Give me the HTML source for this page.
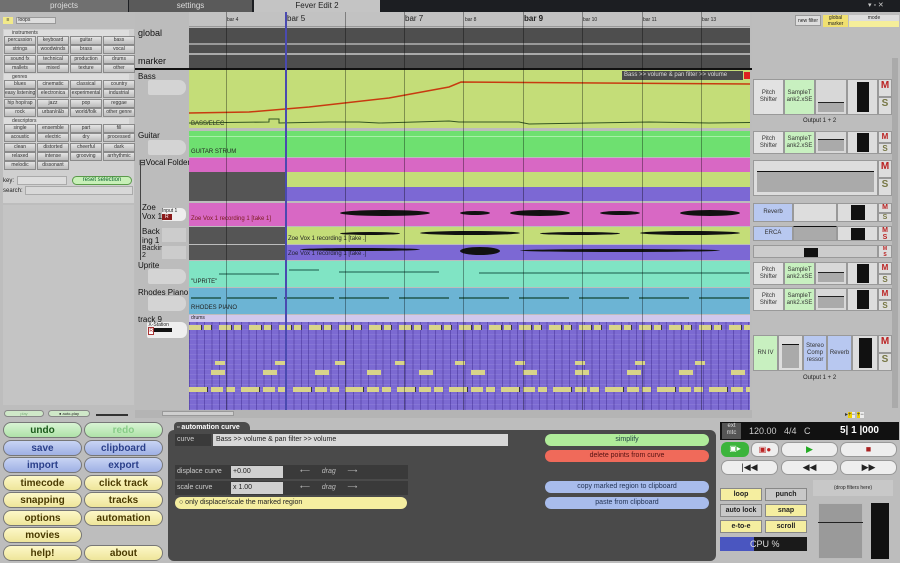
<!DOCTYPE html>
<html><head><meta charset="utf-8"><style>
*{box-sizing:border-box;margin:0;padding:0}
body{width:900px;height:563px;overflow:hidden;background:#bdbdbd;font-family:"Liberation Sans",sans-serif;position:relative;font-size:8px;color:#222}
.a{position:absolute}
.tab{position:absolute;top:0;height:12px;text-align:center;font-size:8px;line-height:12px}
.gb{position:absolute;background:linear-gradient(#e4e4e4,#bcbcbc);border:1px solid #8a8a8a;font-size:5px;text-align:center;color:#333;white-space:nowrap;overflow:hidden}
.sec{position:absolute;left:4px;width:125px;height:6px;background:#ddd;font-size:5px;line-height:6px;padding-left:8px;color:#333}
.bt{position:absolute;height:16px;border-radius:8px;border:1px solid #777;font-weight:bold;font-size:10px;text-align:center;line-height:15px}
.y{background:linear-gradient(#fdf8c8,#eee59a);color:#4a3a00}
.b{background:linear-gradient(#c8d4f4,#9fb0e4);color:#2a3f8a}
.g{background:linear-gradient(#d8f4d4,#aee2a8);color:#1a5a1a}
.lab{position:absolute;font-size:8px;color:#111}
.lane{position:absolute;left:189px;width:561px}
.bar{position:absolute;top:12px;width:1px;height:398px;background:rgba(0,0,0,.35)}
.cl{position:absolute;font-size:6px;color:#222;white-space:nowrap}
.plug{position:absolute;border:1px solid #999;font-size:6px;text-align:center;color:#333;display:flex;align-items:center;justify-content:center;line-height:7px}
.ms{position:absolute;width:14px;background:#ddd;border:1px solid #999;font-weight:bold;font-size:10px;text-align:center}
.wf{position:absolute;background:#111;border-radius:50%}
.tb{position:absolute;font-size:7px;text-align:center;height:13px;line-height:12px;border:1px solid #888;font-weight:bold}
</style></head><body>
<div class="a" style="left:0;top:0;width:900px;height:12px;background:#1c1e22"></div>
<div class="tab" style="left:0;width:128px;background:#707070;color:#ddd">projects</div>
<div class="tab" style="left:129px;width:123px;background:#5a5a5a;color:#ddd">settings</div>
<div class="tab" style="left:254px;width:126px;background:#c4c4c4;color:#222">Fever Edit 2</div>
<div class="a" style="left:868px;top:1px;width:30px;height:9px;color:#ccc;font-size:7px">▾ ▫ ✕</div>

<div class="a" style="left:3px;top:17px;width:10px;height:7px;background:#f2ea8a;font-size:5px;text-align:center">≡</div>
<div class="a" style="left:16px;top:17px;width:40px;height:7px;background:#ddd;border:1px solid #999;font-size:5px;line-height:5px">&nbsp;loops</div>
<div class="a" style="left:3px;top:29px;width:131px;height:174px;background:#d0d0d0"></div>
<div class="sec" style="top:30px">instruments</div>
<div class="sec" style="top:74px">genres</div>
<div class="sec" style="top:118px">descriptors</div>
<div id="gr"></div>
<div class="a" style="left:3px;top:178px;font-size:6px">key:</div>
<div class="a" style="left:17px;top:176px;width:50px;height:9px;background:#ddd;border:1px solid #aaa"></div>
<div class="a" style="left:72px;top:176px;width:60px;height:9px;background:#c8f0b8;border:1px solid #5a9a4a;border-radius:5px;font-size:6px;text-align:center;line-height:7px;color:#163">reset selection</div>
<div class="a" style="left:3px;top:188px;font-size:6px">search:</div>
<div class="a" style="left:25px;top:186px;width:108px;height:9px;background:#d8d8d8;border:1px solid #aaa"></div>
<div class="a" style="left:3px;top:205px;width:131px;height:200px;background:#c4c4c4"></div>
<div class="a" style="left:4px;top:410px;width:40px;height:7px;background:#cfe8c8;border:1px solid #888;border-radius:4px;font-size:4px;text-align:center;color:#7a7">play</div>
<div class="a" style="left:48px;top:410px;width:42px;height:7px;background:#cfe8c8;border:1px solid #888;border-radius:4px;font-size:4px;text-align:center">● auto-play</div>
<div class="a" style="left:96px;top:414px;width:32px;height:2px;background:#333"></div>

<div class="a" style="left:135px;top:12px;width:617px;height:398px;background:#bcbcbc"></div>
<div class="a" style="left:189px;top:12px;width:561px;height:15px;background:#c2c2c2;border-bottom:1px solid #999"></div>
<div class="cl" style="left:227px;top:17px;font-size:5px">bar 4</div>
<div class="cl" style="left:287px;top:14px;font-size:8px">bar 5</div>
<div class="cl" style="left:405px;top:14px;font-size:8px">bar 7</div>
<div class="cl" style="left:524px;top:14px;font-size:8px;font-weight:bold">bar 9</div>
<div class="cl" style="left:643px;top:17px;font-size:5px">bar 11</div>
<div class="cl" style="left:702px;top:17px;font-size:5px">bar 13</div>
<div class="cl" style="left:465px;top:17px;font-size:5px">bar 8</div>
<div class="cl" style="left:583px;top:17px;font-size:5px">bar 10</div>
<div class="lab" style="left:138px;top:28px;font-size:9px">global</div>
<div class="lab" style="left:138px;top:56px;font-size:9px">marker</div>
<div class="lane" style="top:28px;height:41px;background:#4e4e4e"></div>
<div class="lane" style="top:43px;height:2px;background:#999"></div>
<div class="lane" style="top:53px;height:2px;background:#aaa"></div>
<div class="a" style="left:135px;top:68px;width:617px;height:2px;background:#111"></div>

<div class="lab" style="left:138px;top:72px">Bass</div>
<div class="a" style="left:148px;top:80px;width:38px;height:15px;background:#d4d4d4;border-radius:2px 7px 7px 2px"></div>
<div class="lane" style="top:70px;height:58px;background:#c4dd78"></div>
<div class="cl" style="left:191px;top:121px">BASS/ELEC</div>
<div class="a" style="left:622px;top:71px;width:121px;height:9px;background:#4a4a4a;color:#ddd;font-size:6px;line-height:9px;padding-left:2px">Bass &gt;&gt; volume &amp; pan filter &gt;&gt; volume</div>
<div class="a" style="left:744px;top:72px;width:6px;height:7px;background:#d22"></div>
<svg class="a" style="left:189px;top:70px" width="561" height="58"><polyline points="0,43 60,42 120,37 200,28 260,17 272,12 561,14" fill="none" stroke="#c83a10" stroke-width="1.5"/><polyline points="0,53 80,52 80,49 90,49 90,53 140,52 170,52 190,53 260,51 270,52 330,52 340,54 400,53 460,52 520,53 600,52 620,50 630,54 561,54" fill="none" stroke="#335522" stroke-width="1"/></svg>

<div class="lab" style="left:138px;top:131px">Guitar</div>
<div class="a" style="left:148px;top:140px;width:38px;height:15px;background:#d4d4d4;border-radius:2px 7px 7px 2px"></div>
<div class="lane" style="top:131px;height:26px;background:#6ee070"></div>
<div class="lane" style="top:136px;height:1px;background:#a8f0a8"></div>
<div class="cl" style="left:191px;top:149px">GUITAR STRUM</div>

<div class="lab" style="left:139px;top:158px;font-size:8px">⊟Vocal Folder</div>
<div class="lane" style="top:158px;height:14px;background:#d868c4"></div>
<div class="lane" style="top:172px;height:15px;background:#c4dd78"></div>
<div class="lane" style="top:187px;height:14px;background:#7c68d4"></div>
<div class="a" style="left:189px;top:172px;width:97px;height:29px;background:#555"></div>

<div class="lab" style="left:142px;top:203px">Zoe<br>Vox 1</div>
<div class="a" style="left:162px;top:208px;width:24px;height:13px;background:#eee;border-radius:2px 5px 5px 2px;font-size:5px">Input 1<br><span style="background:#8a1a1a;color:#fff;padding:0 3px">R</span></div>
<div class="lane" style="top:203px;height:23px;background:#d868c4"></div>
<div class="cl" style="left:191px;top:216px;color:#7a1a1a">Zoe Vox 1 recording 1 [take 1]</div>
<div class="wf" style="left:340px;top:210px;width:90px;height:6px"></div>
<div class="wf" style="left:460px;top:211px;width:30px;height:4px"></div>
<div class="wf" style="left:510px;top:210px;width:60px;height:6px"></div>
<div class="wf" style="left:600px;top:211px;width:40px;height:4px"></div>
<div class="wf" style="left:680px;top:210px;width:60px;height:6px"></div>

<div class="lab" style="left:142px;top:227px">Back<br>ing 1</div>
<div class="a" style="left:162px;top:228px;width:24px;height:14px;background:#ccc"></div>
<div class="lane" style="top:227px;height:17px;background:#c4dd78"></div>
<div class="a" style="left:189px;top:227px;width:97px;height:17px;background:#555"></div>
<div class="cl" style="left:288px;top:236px">Zoe Vox 1 recording 1 [take .]</div>
<div class="wf" style="left:340px;top:232px;width:60px;height:3px"></div>
<div class="wf" style="left:420px;top:231px;width:100px;height:4px"></div>
<div class="wf" style="left:540px;top:232px;width:80px;height:3px"></div>
<div class="wf" style="left:640px;top:231px;width:100px;height:4px"></div>

<div class="lab" style="left:142px;top:245px;font-size:7px">Backing<br>2</div>
<div class="a" style="left:162px;top:246px;width:24px;height:13px;background:#ccc"></div>
<div class="lane" style="top:245px;height:15px;background:#7c68d4"></div>
<div class="a" style="left:189px;top:245px;width:97px;height:15px;background:#555"></div>
<div class="cl" style="left:288px;top:251px;color:#223">Zoe Vox 1 recording 1 [take .]</div>
<div class="wf" style="left:300px;top:248px;width:120px;height:3px"></div>
<div class="wf" style="left:460px;top:247px;width:40px;height:8px"></div>
<div class="wf" style="left:520px;top:249px;width:200px;height:3px"></div>

<div class="lab" style="left:138px;top:261px">Uprite</div>
<div class="a" style="left:148px;top:269px;width:38px;height:15px;background:#d4d4d4;border-radius:2px 7px 7px 2px"></div>
<div class="lane" style="top:261px;height:26px;background:#80e4c4"></div>
<div class="cl" style="left:191px;top:279px">"UPRITE"</div>
<svg class="a" style="left:189px;top:261px" width="561" height="26"><path d="M30,13H90M100,9H130M150,11H250M290,12H560" stroke="#1a5a4a" stroke-width="1"/></svg>

<div class="lab" style="left:138px;top:288px">Rhodes Piano</div>
<div class="a" style="left:148px;top:296px;width:38px;height:15px;background:#d4d4d4;border-radius:2px 7px 7px 2px"></div>
<div class="lane" style="top:288px;height:26px;background:#6cb4d4"></div>
<div class="cl" style="left:191px;top:305px">RHODES PIANO</div>
<svg class="a" style="left:189px;top:288px" width="561" height="26"><path d="M2,10H32M38,10H88M95,10H145M150,10H200M210,10H260M270,10H320M330,10H380M390,10H440M450,10H500M510,10H560" stroke="#143" stroke-width="1.2"/></svg>

<div class="lab" style="left:138px;top:315px">track 9</div>
<div class="a" style="left:147px;top:322px;width:40px;height:16px;background:#eee;border-radius:2px 6px 6px 2px;font-size:5px">&nbsp;X-Station<br>&nbsp;<span style="background:#fff;border:1px solid #a33;color:#a33">R</span><span style="background:#111;display:inline-block;width:18px;height:4px"></span></div>
<div class="lane" style="top:315px;height:7px;background:#d0c8ec"></div>
<div class="cl" style="left:191px;top:315px;font-size:5px">drums</div>
<div class="lane" style="top:322px;height:88px;background:#7c6ad2;background-image:repeating-linear-gradient(90deg,rgba(40,20,120,.35) 0 1px,transparent 1px 7.45px),repeating-linear-gradient(0deg,rgba(255,255,255,.08) 0 1px,transparent 1px 5px)"></div>
<div class="lane" style="top:325px;height:5px;background:repeating-linear-gradient(90deg,#d8d48a 0 12px,#333 12px 13px,transparent 13px 15px,#d8d48a 15px 22px,#333 22px 23px,transparent 23px 30px)"></div>
<div class="lane" style="top:370px;height:5px;background:repeating-linear-gradient(90deg,transparent 0 22px,#d8d48a 22px 36px,transparent 36px 52px)"></div>
<div class="lane" style="top:387px;height:5px;background:repeating-linear-gradient(90deg,#d8d48a 0 18px,#333 18px 19px,transparent 19px 22px,#d8d48a 22px 34px,transparent 34px 37px,#d8d48a 37px 46px,transparent 46px 52px)"></div>
<div class="lane" style="top:361px;height:4px;background:repeating-linear-gradient(90deg,transparent 0 26px,#d8d48a 26px 36px,transparent 36px 60px)"></div>

<div class="bar" style="left:226px"></div><div class="bar" style="left:345px"></div><div class="bar" style="left:404px"></div><div class="bar" style="left:463px"></div><div class="bar" style="left:523px"></div><div class="bar" style="left:582px"></div><div class="bar" style="left:642px"></div><div class="bar" style="left:701px"></div>
<div class="a" style="left:285px;top:12px;width:2px;height:398px;background:#4a4ab0"></div>
<div class="a" style="left:140px;top:160px;width:1px;height:100px;background:#444"></div>

<div class="a" style="left:135px;top:410px;width:617px;height:8px;background:#b4b4b4"></div>
<div class="a" style="left:162px;top:411px;width:72px;height:5px;background:#cfcfcf;border:1px solid #999"></div>
<div class="a" style="left:845px;top:411px;width:50px;height:6px;font-size:6px;color:#333">▸<span style="background:#f0d000">+</span><span style="background:#eee">−</span> <span style="background:#f0d000">+</span><span style="background:#eee">−</span></div>

<div class="a" style="left:795px;top:15px;width:26px;height:11px;background:#ddd;border:1px solid #999;font-size:5px;text-align:center;line-height:10px">new filter</div>
<div class="a" style="left:823px;top:15px;width:25px;height:6px;background:#f0e070;font-size:5px;text-align:center;line-height:6px">global</div>
<div class="a" style="left:823px;top:21px;width:25px;height:6px;background:#f0e070;font-size:5px;text-align:center;line-height:6px">marker</div>
<div class="a" style="left:849px;top:15px;width:50px;height:6px;background:#ddd;font-size:5px;text-align:center">mode</div>
<div class="a" style="left:849px;top:21px;width:50px;height:6px;background:#f5ee9a"></div>
<div class="a" style="left:892px;top:58px;width:6px;height:350px;background:#aaa"></div>

<div class="plug" style="left:753px;top:79px;width:31px;height:36px;background:#e2e2e2">Pitch Shifter</div>
<div class="plug" style="left:784px;top:79px;width:31px;height:36px;background:#c8f0c0">SampleT ank2.xSE</div>
<div class="plug" style="left:815px;top:79px;width:32px;height:36px;background:#d8d8d8"><div style="position:absolute;left:2px;right:2px;bottom:2px;height:10px;background:#aaa;border-top:1px solid #222"></div></div>
<div class="plug" style="left:847px;top:79px;width:31px;height:36px;background:#ddd"><div style="width:12px;height:30px;background:#111"></div></div>
<div class="ms" style="left:878px;top:79px;height:18px;color:#b22">M</div><div class="ms" style="left:878px;top:97px;height:18px;color:#774">S</div>
<div class="cl" style="left:803px;top:118px">Output 1 + 2</div>
<div class="plug" style="left:753px;top:131px;width:31px;height:23px;background:#e2e2e2">Pitch Shifter</div>
<div class="plug" style="left:784px;top:131px;width:31px;height:23px;background:#c8f0c0">SampleT ank2.xSE</div>
<div class="plug" style="left:815px;top:131px;width:32px;height:23px;background:#d8d8d8"><div style="position:absolute;left:2px;right:2px;bottom:2px;height:12px;background:#aaa;border-top:1px solid #222"></div></div>
<div class="plug" style="left:847px;top:131px;width:31px;height:23px;background:#ddd"><div style="width:12px;height:19px;background:#111"></div></div>
<div class="ms" style="left:878px;top:131px;height:12px;color:#b22;font-size:8px;line-height:10px">M</div><div class="ms" style="left:878px;top:143px;height:11px;color:#774;font-size:8px;line-height:10px">S</div>
<div class="plug" style="left:753px;top:160px;width:125px;height:36px;background:#ddd"><div style="position:absolute;left:3px;right:3px;top:10px;bottom:3px;background:#aaa;border-top:1px solid #111"></div></div>
<div class="ms" style="left:878px;top:160px;height:18px;color:#b22">M</div><div class="ms" style="left:878px;top:178px;height:18px;color:#774">S</div>
<div class="plug" style="left:753px;top:203px;width:40px;height:19px;background:#b8c8f0">Reverb</div>
<div class="plug" style="left:793px;top:203px;width:44px;height:19px;background:#ddd"></div>
<div class="plug" style="left:837px;top:203px;width:41px;height:19px;background:#ddd"><div style="width:14px;height:15px;background:#111"></div></div>
<div class="ms" style="left:878px;top:203px;height:10px;color:#b22;font-size:7px;line-height:8px">M</div><div class="ms" style="left:878px;top:213px;height:9px;color:#774;font-size:7px;line-height:8px">S</div>
<div class="plug" style="left:753px;top:226px;width:40px;height:15px;background:#b8c8f0">ERCA</div>
<div class="plug" style="left:793px;top:226px;width:44px;height:15px;background:#aaa;border-top:1px solid #111"></div>
<div class="plug" style="left:837px;top:226px;width:41px;height:15px;background:#ddd"><div style="width:14px;height:12px;background:#111"></div></div>
<div class="ms" style="left:878px;top:226px;height:15px;color:#b22;font-size:7px;line-height:7px">M<br>S</div>
<div class="plug" style="left:753px;top:245px;width:125px;height:13px;background:#ccc"><div style="position:absolute;left:50px;top:2px;width:14px;height:9px;background:#111"></div></div>
<div class="ms" style="left:878px;top:245px;height:13px;color:#b22;font-size:5px;line-height:6px">M<br>S</div>
<div class="plug" style="left:753px;top:262px;width:31px;height:23px;background:#e2e2e2">Pitch Shifter</div>
<div class="plug" style="left:784px;top:262px;width:31px;height:23px;background:#c8f0c0">SampleT ank2.xSE</div>
<div class="plug" style="left:815px;top:262px;width:32px;height:23px;background:#d8d8d8"><div style="position:absolute;left:2px;right:2px;bottom:2px;height:10px;background:#aaa;border-top:1px solid #222"></div></div>
<div class="plug" style="left:847px;top:262px;width:31px;height:23px;background:#ddd"><div style="width:12px;height:19px;background:#111"></div></div>
<div class="ms" style="left:878px;top:262px;height:12px;color:#b22;font-size:8px;line-height:10px">M</div><div class="ms" style="left:878px;top:274px;height:11px;color:#774;font-size:8px;line-height:10px">S</div>
<div class="plug" style="left:753px;top:288px;width:31px;height:23px;background:#e2e2e2">Pitch Shifter</div>
<div class="plug" style="left:784px;top:288px;width:31px;height:23px;background:#c8f0c0">SampleT ank2.xSE</div>
<div class="plug" style="left:815px;top:288px;width:32px;height:23px;background:#d8d8d8"><div style="position:absolute;left:2px;right:2px;bottom:2px;height:12px;background:#aaa;border-top:1px solid #222"></div></div>
<div class="plug" style="left:847px;top:288px;width:31px;height:23px;background:#ddd"><div style="width:12px;height:19px;background:#111"></div></div>
<div class="ms" style="left:878px;top:288px;height:12px;color:#b22;font-size:8px;line-height:10px">M</div><div class="ms" style="left:878px;top:300px;height:11px;color:#774;font-size:8px;line-height:10px">S</div>
<div class="plug" style="left:753px;top:335px;width:25px;height:36px;background:#c8f0c0">RN IV</div>
<div class="plug" style="left:778px;top:335px;width:25px;height:36px;background:#ddd"><div style="position:absolute;left:3px;right:3px;top:8px;bottom:2px;background:#aaa;border-top:1px solid #111"></div></div>
<div class="plug" style="left:803px;top:335px;width:24px;height:36px;background:#b8c8f0">Stereo Comp ressor</div>
<div class="plug" style="left:827px;top:335px;width:25px;height:36px;background:#b8c8f0">Reverb</div>
<div class="plug" style="left:852px;top:335px;width:26px;height:36px;background:#ddd"><div style="width:13px;height:30px;background:#111"></div></div>
<div class="ms" style="left:878px;top:335px;height:18px;color:#b22">M</div><div class="ms" style="left:878px;top:353px;height:18px;color:#774">S</div>
<div class="cl" style="left:803px;top:375px">Output 1 + 2</div>

<div class="bt g" style="left:3px;top:422px;width:79px">undo</div>
<div class="bt g" style="left:84px;top:422px;width:79px;color:#8c8">redo</div>
<div class="bt b" style="left:3px;top:440px;width:79px">save</div>
<div class="bt b" style="left:84px;top:440px;width:79px">clipboard</div>
<div class="bt b" style="left:3px;top:457px;width:79px">import</div>
<div class="bt b" style="left:84px;top:457px;width:79px">export</div>
<div class="bt y" style="left:3px;top:475px;width:79px">timecode</div>
<div class="bt y" style="left:84px;top:475px;width:79px">click track</div>
<div class="bt y" style="left:3px;top:492px;width:79px">snapping</div>
<div class="bt y" style="left:84px;top:492px;width:79px">tracks</div>
<div class="bt y" style="left:3px;top:510px;width:79px">options</div>
<div class="bt y" style="left:84px;top:510px;width:79px">automation</div>
<div class="bt y" style="left:3px;top:527px;width:79px">movies</div>
<div class="bt y" style="left:3px;top:545px;width:79px">help!</div>
<div class="bt y" style="left:84px;top:545px;width:79px">about</div>

<div class="a" style="left:168px;top:430px;width:548px;height:131px;background:#4a4a4a;border-radius:6px"></div>
<div class="a" style="left:174px;top:422px;width:76px;height:11px;background:#4a4a4a;border-radius:4px 6px 0 0;color:#fff;font-size:7px;font-weight:bold;padding-left:3px;line-height:11px">▫ automation curve</div>
<div class="a" style="left:175px;top:434px;width:36px;height:12px;background:#3a3a3a;color:#ccc;font-size:7px;line-height:12px;padding-left:2px">curve</div>
<div class="a" style="left:213px;top:434px;width:295px;height:12px;background:#d8d8d8;font-size:7px;line-height:12px;padding-left:3px">Bass &gt;&gt; volume &amp; pan filter &gt;&gt; volume</div>
<div class="a" style="left:175px;top:465px;width:233px;height:14px;background:#3a3a3a"></div>
<div class="a" style="left:175px;top:481px;width:233px;height:14px;background:#3a3a3a"></div>
<div class="a" style="left:177px;top:465px;color:#ccc;font-size:7px;line-height:14px">displace curve</div>
<div class="a" style="left:177px;top:481px;color:#ccc;font-size:7px;line-height:14px">scale curve</div>
<div class="a" style="left:231px;top:466px;width:52px;height:12px;background:#d0d0d0;font-size:7px;line-height:12px;padding-left:2px">+0.00</div>
<div class="a" style="left:231px;top:482px;width:52px;height:12px;background:#d0d0d0;font-size:7px;line-height:12px;padding-left:2px">x 1.00</div>
<div class="a" style="left:300px;top:465px;width:100px;color:#bbb;font-size:7px;line-height:14px">⟵&nbsp;&nbsp;&nbsp;&nbsp;&nbsp;&nbsp;<i>drag</i>&nbsp;&nbsp;&nbsp;&nbsp;&nbsp;&nbsp;⟶</div>
<div class="a" style="left:300px;top:481px;width:100px;color:#bbb;font-size:7px;line-height:14px">⟵&nbsp;&nbsp;&nbsp;&nbsp;&nbsp;&nbsp;<i>drag</i>&nbsp;&nbsp;&nbsp;&nbsp;&nbsp;&nbsp;⟶</div>
<div class="a" style="left:175px;top:497px;width:232px;height:12px;background:#f5eea0;border-radius:6px;font-size:7px;line-height:12px;padding-left:4px">○ only displace/scale the marked region</div>
<div class="a" style="left:545px;top:434px;width:164px;height:12px;background:#b0ec9a;border-radius:6px;font-size:7px;text-align:center;line-height:12px;color:#244">simplify</div>
<div class="a" style="left:545px;top:450px;width:164px;height:12px;background:#f06a5a;border-radius:6px;font-size:7px;text-align:center;line-height:12px;color:#511">delete points from curve</div>
<div class="a" style="left:545px;top:481px;width:164px;height:12px;background:#a8bcec;border-radius:6px;font-size:7px;text-align:center;line-height:12px;color:#235">copy marked region to clipboard</div>
<div class="a" style="left:545px;top:497px;width:164px;height:12px;background:#a8bcec;border-radius:6px;font-size:7px;text-align:center;line-height:12px;color:#235">paste from clipboard</div>

<div class="a" style="left:720px;top:422px;width:179px;height:18px;background:#111"></div>
<div class="a" style="left:722px;top:423px;width:19px;height:16px;background:#555;color:#ddd;font-size:6px;text-align:center;line-height:7px">ext<br>mtc</div>
<div class="a" style="left:749px;top:423px;color:#ccc;font-size:9px;line-height:16px">120.00 &nbsp;&nbsp;4/4 &nbsp;&nbsp;C</div>
<div class="a" style="left:840px;top:423px;color:#fff;font-size:10px;font-weight:bold;line-height:16px">5| 1 |000</div>
<div class="a" style="left:721px;top:442px;width:28px;height:15px;background:#3cb43c;border-radius:6px;color:#fff;font-size:8px;text-align:center;line-height:14px">▣▸</div>
<div class="a" style="left:751px;top:442px;width:28px;height:15px;background:#eee;border:1px solid #999;border-radius:6px;color:#b22;font-size:8px;text-align:center;line-height:13px">▣●</div>
<div class="a" style="left:781px;top:442px;width:57px;height:15px;background:#eee;border:1px solid #999;border-radius:7px;color:#2a2;font-size:9px;text-align:center;line-height:13px">▶</div>
<div class="a" style="left:840px;top:442px;width:57px;height:15px;background:#eee;border:1px solid #999;border-radius:7px;color:#a22;font-size:9px;text-align:center;line-height:13px">■</div>
<div class="a" style="left:721px;top:460px;width:57px;height:15px;background:#eee;border:1px solid #999;border-radius:7px;font-size:9px;text-align:center;line-height:13px">|◀◀</div>
<div class="a" style="left:781px;top:460px;width:57px;height:15px;background:#eee;border:1px solid #999;border-radius:7px;font-size:9px;text-align:center;line-height:13px">◀◀</div>
<div class="a" style="left:840px;top:460px;width:57px;height:15px;background:#eee;border:1px solid #999;border-radius:7px;font-size:9px;text-align:center;line-height:13px">▶▶</div>
<div class="tb" style="left:720px;top:488px;width:42px;background:#f5eea0">loop</div>
<div class="tb" style="left:765px;top:488px;width:42px;background:#c8c8c8">punch</div>
<div class="tb" style="left:720px;top:504px;width:42px;background:#c8c8c8">auto lock</div>
<div class="tb" style="left:765px;top:504px;width:42px;background:#f5eea0">snap</div>
<div class="tb" style="left:720px;top:520px;width:42px;background:#f5eea0">e-to-e</div>
<div class="tb" style="left:765px;top:520px;width:42px;background:#f5eea0">scroll</div>
<div class="a" style="left:720px;top:537px;width:87px;height:14px;background:#1a1a1a"></div>
<div class="a" style="left:720px;top:537px;width:34px;height:14px;background:#4a56c0"></div>
<div class="a" style="left:750px;top:537px;color:#ddd;font-size:9px;line-height:14px">CPU %</div>
<div class="a" style="left:813px;top:480px;width:80px;height:16px;background:#c8c8c8;font-size:5px;text-align:center;line-height:16px">(drop filters here)</div>
<div class="a" style="left:818px;top:503px;width:45px;height:56px;background:#9a9a9a;border:1px solid #bbb"></div>
<div class="a" style="left:818px;top:522px;width:45px;height:1px;background:#222"></div>
<div class="a" style="left:871px;top:503px;width:18px;height:56px;background:#111"></div>

<script>
var cats=[["percussion","keyboard","guitar","bass","strings","woodwinds","brass","vocal","sound fx","technical","production","drums","mallets","mixed","texture","other"],["blues","cinematic","classical","country","easy listening","electronica","experimental","industrial","hip hop/rap","jazz","pop","reggae","rock","urban/r&b","world/folk","other genre"],["single","ensemble","part","fill","acoustic","electric","dry","processed","clean","distorted","cheerful","dark","relaxed","intense","grooving","arrhythmic","melodic","dissonant"]];
var tops=[36,80,124],h='';
cats.forEach(function(c,i){c.forEach(function(t,j){var r=Math.floor(j/4),k=j%4;h+='<div class="gb" style="left:'+(4+k*33)+'px;top:'+(tops[i]+r*9.3)+'px;width:32px;height:9px;line-height:7px">'+t.replace('&','&amp;')+'</div>';});});
document.getElementById('gr').innerHTML=h;
</script>
</body></html>
